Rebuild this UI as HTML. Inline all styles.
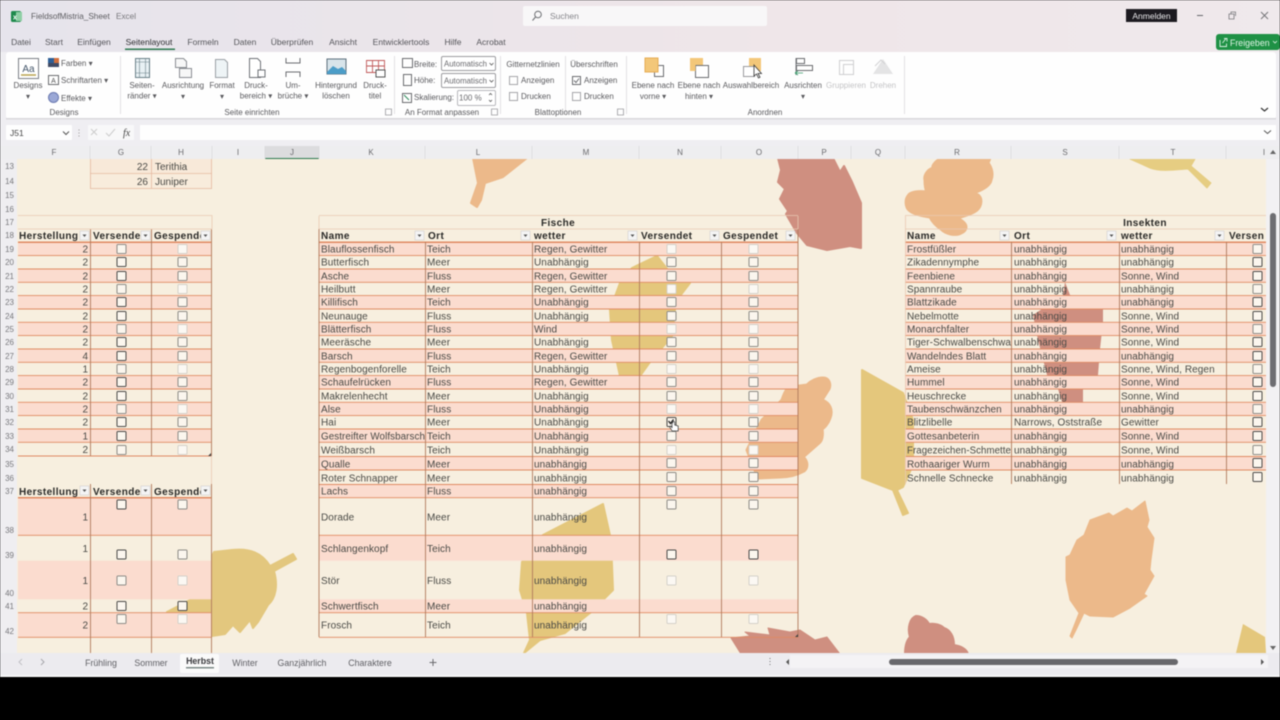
<!DOCTYPE html>
<html lang="de"><head><meta charset="utf-8"><title>FieldsofMistria_Sheet - Excel</title>
<style>
html,body{margin:0;padding:0;background:#000;width:1280px;height:720px;overflow:hidden}
svg{display:block;filter:blur(.45px)}
text{font-family:"Liberation Sans",sans-serif}
.c,.f,.m{width:9px;height:9px;rx:1px}
.c{fill:#fbf6ee;stroke:#4b4a48;stroke-width:1}
.m{fill:#fbf6ee;stroke:#8d8b86;stroke-width:1}
.f{fill:#fbf8f3;stroke:#d4d0c9;stroke-width:1}
.ic{fill:none;stroke:#6a6c70;stroke-width:1}
.lf{stroke-linejoin:round;stroke-width:2}
</style></head><body>
<svg xmlns="http://www.w3.org/2000/svg" width="1280" height="720" viewBox="0 0 1280 720">
<defs>
<linearGradient id="tb" x1="0" x2="1" y1="0" y2="0"><stop offset="0" stop-color="#e6e4ec"/><stop offset=".6" stop-color="#efe6e9"/><stop offset="1" stop-color="#efe9ec"/></linearGradient>
<clipPath id="sh"><rect x="17" y="159" width="1249" height="494"/></clipPath>
</defs>
<rect width="1280" height="720" fill="#000"/>
<rect width="1280" height="677" fill="#efeef2"/>
<rect width="1280" height="52" fill="url(#tb)"/>

<!-- title bar -->
<rect x="11" y="11" width="10" height="11" rx="1.5" fill="#1f8a4d"/><rect x="16" y="12" width="6" height="9" fill="#8fcfa5"/>
<text x="13" y="19.5" font-size="7" font-weight="bold" fill="#fff">x</text>
<text x="31" y="19" font-size="8.2" fill="#5c5c60">FieldsofMistria_Sheet</text><text x="116" y="19" font-size="8.2" fill="#77777b">Excel</text>
<rect x="523" y="6" width="244" height="20" rx="2" fill="#f8f7f8"/>
<circle cx="538" cy="14.5" r="3.3" class="ic"/><path d="M535.5 17 L532.5 20.5" class="ic"/>
<text x="550" y="19" font-size="8.5" fill="#85858a">Suchen</text>
<rect x="1126" y="9" width="51" height="13" fill="#1c1a20"/><text x="1151.5" y="19" font-size="8.5" text-anchor="middle" fill="#e8e8ea">Anmelden</text>
<path d="M1197 15.5h6" stroke="#66666a"/><path d="M1229 14h5v5h-5zM1231 14v-2h4.500v4" fill="none" stroke="#77777b" stroke-width=".8"/><path d="M1261 12l7 7M1268 12l-7 7" stroke="#77777b"/>

<!-- tabs -->
<g font-size="8.500" fill="#55555a" text-anchor="middle">
<text x="21" y="45">Datei</text><text x="54" y="45">Start</text><text x="94" y="45">Einfügen</text><text x="149" y="45" fill="#2d2d30">Seitenlayout</text><text x="203" y="45">Formeln</text><text x="245" y="45">Daten</text><text x="292" y="45">Überprüfen</text><text x="343" y="45">Ansicht</text><text x="401" y="45">Entwicklertools</text><text x="453" y="45">Hilfe</text><text x="491" y="45">Acrobat</text>
</g>
<rect x="125" y="48.500" width="50" height="1.500" fill="#2c7a4f"/>
<rect x="1216" y="34" width="64" height="16" rx="3" fill="#1f9145"/>
<path d="M1220 40v6.500h6.500v-3M1222.500 43l3.500-4.500M1224 38.500h3v3" fill="none" stroke="#d8f0e0" stroke-width=".9"/>
<text x="1230" y="46" font-size="8.800" fill="#dff3e6">Freigeben</text><path d="M1273 41l2 2 2-2" fill="none" stroke="#dff3e6" stroke-width=".8"/>

<!-- ribbon -->
<rect x="6" y="52" width="1270" height="67" rx="3" fill="#fefefe"/><rect x="6" y="118" width="1270" height="1.500" fill="#d9d8dc"/>
<g stroke="#e2e1e4"><path d="M120.500 56v58M394.500 56v58M565.500 56v58M626.500 56v58M904.500 56v58M500.500 56v58"/></g>
<!-- ribbon icons -->
<rect x="18.500" y="58.500" width="20" height="20" fill="#fff" stroke="#7b7f86"/><text x="28.500" y="72" font-size="10" text-anchor="middle" fill="#44566a">Aa</text><path d="M21 75h15" stroke="#b9a24c" stroke-width="1.500"/>
<rect x="48" y="58" width="6" height="5" fill="#2e5f96"/><rect x="54" y="58" width="5" height="5" fill="#d36f3c"/><rect x="48" y="63" width="11" height="4" fill="#404a64"/>
<rect x="48.500" y="75.500" width="10" height="9" class="ic"/><text x="53.500" y="83" font-size="7" text-anchor="middle" fill="#555">A</text>
<circle cx="53.500" cy="97.500" r="5" fill="#9ba8d6" stroke="#6b7ab0"/>
<rect x="135.500" y="58.500" width="14" height="19" fill="#e8f1f4" stroke="#6a8088"/><path d="M139.500 58v20M145.500 58v20M135 62h15M135 73h15" stroke="#6a8088" stroke-width=".6"/>
<path d="M175.500 58.500h8l3 3v6h-11zM179.500 68.500h12v9h-12z" fill="#f7f7f7" stroke="#8a8d92"/>
<path d="M215.500 59.500h9l3 3v15h-12z" fill="#eef4f6" stroke="#9aa0a5"/>
<path d="M249.500 58.500h8l3 3v16h-11z" fill="#fff" stroke="#6e7176"/><rect x="258" y="70" width="7" height="7" fill="#fff" stroke="#6e7176"/>
<path d="M286 58v5h14v-5M286 77v-5h14v5" class="ic"/>
<rect x="327" y="59" width="19" height="15" fill="#d8e4ea" stroke="#5d6f7c"/><path d="M327 72l6-6 5 3 4-2 4 4v3h-19z" fill="#4c9dc8"/>
<path d="M366.500 60.500h18v12h-18zM372.500 60v13M378.500 60v13M366 66h19" fill="none" stroke="#c15a5a" stroke-width=".9"/><rect x="376" y="70" width="9" height="7" fill="#fff" stroke="#555"/>
<rect x="402.500" y="58.500" width="10" height="9" class="ic"/><rect x="403.500" y="74.500" width="8" height="11" class="ic"/><rect x="402.500" y="93.500" width="9" height="9" class="ic"/><path d="M404 95l5 5" stroke="#2d8a5a"/>
<rect x="441.500" y="56.500" width="54" height="14" rx="1.500" fill="#fff" stroke="#9c9ca0"/><rect x="441.500" y="73.500" width="54" height="14" rx="1.500" fill="#fff" stroke="#9c9ca0"/><rect x="457.500" y="90.500" width="38" height="15" rx="1.500" fill="#fff" stroke="#b8b8bc"/>
<path d="M489.500 63l2 2 2-2M489.500 80l2 2 2-2" fill="none" stroke="#555" stroke-width=".8"/><path d="M489 95l1.500-1.500 1.500 1.500M489 100l1.500 1.500 1.500-1.500" fill="none" stroke="#555" stroke-width=".8"/>
<rect x="509.500" y="76.500" width="8" height="8" fill="none" stroke="#a6a6aa"/><rect x="509.500" y="92.500" width="8" height="8" fill="none" stroke="#a6a6aa"/><rect x="572.500" y="76.500" width="8" height="8" class="ic"/><path d="M574 80.500l2 2 3-4" class="ic"/><rect x="572.500" y="92.500" width="8" height="8" fill="none" stroke="#a6a6aa"/>
<rect x="645" y="58" width="13" height="14" fill="#f3c779" stroke="#e6ad55"/><path d="M658.500 65.500h5v11h-9v-4" class="ic"/>
<rect x="690" y="58" width="13" height="10" fill="#f3c779"/><rect x="695.500" y="65.500" width="13" height="12" fill="#fff" stroke="#6a6c70"/><rect x="690" y="58" width="5.500" height="13" fill="#f3c779"/>
<rect x="749" y="58" width="12" height="13" fill="#f3c779"/><rect x="743.500" y="66.500" width="11" height="10" fill="#fff" stroke="#9a9a9e"/>
<path d="M754 65v11l2.500-2 2 4 1.500-.8-2-3.700h3.500z" fill="#fff" stroke="#333" stroke-width=".8"/>
<path d="M796 58v17" stroke="#7a7d82"/><rect x="796.500" y="58.500" width="8" height="5" class="ic"/><rect x="796.500" y="65.500" width="16" height="5" class="ic"/><path d="M795 73h8M795 73l3-2M795 73l3 2" stroke="#3a9a6a" fill="none" stroke-width=".8"/>
<path d="M839.500 60.500h14v14h-14zM843.500 64.500h10v10h-10z" fill="none" stroke="#cfcfd1"/>
<path d="M873 74l10-15 10 15z" fill="#e4e4e5"/><path d="M875 66l6-6 4 4" fill="none" stroke="#d2d2d4"/>
<path d="M385.500 109h6v6h-6z" fill="none" stroke="#9a9a9e" stroke-width=".8"/><path d="M491.500 109h6v6h-6zM617.500 109h6v6h-6z" fill="none" stroke="#9a9a9e" stroke-width=".8"/>
<path d="M1261 108l3.500 3 3.500-3" fill="none" stroke="#333" stroke-width="1.200"/>
<g font-size="8" fill="#5a5a5e" text-anchor="middle">
<text x="28" y="88">Designs</text><text x="28" y="99">▾</text><text x="142" y="88">Seiten-</text><text x="142" y="98.500">ränder ▾</text>
<text x="183" y="88">Ausrichtung</text><text x="183" y="99">▾</text><text x="222" y="88">Format</text><text x="222" y="99">▾</text><text x="256" y="88">Druck-</text><text x="256" y="98.500">bereich ▾</text>
<text x="293" y="88">Um-</text><text x="293" y="98.500">brüche ▾</text><text x="336" y="88">Hintergrund</text><text x="336" y="98.500">löschen</text><text x="375" y="88">Druck-</text><text x="375" y="98.500">titel</text>
<text x="653" y="88">Ebene nach</text><text x="653" y="99">vorne ▾</text><text x="699" y="88">Ebene nach</text><text x="699" y="99">hinten ▾</text><text x="751" y="88">Auswahlbereich</text><text x="803" y="88">Ausrichten</text><text x="803" y="99">▾</text>
<text x="846" y="88" fill="#c4c4c6">Gruppieren</text><text x="883" y="88" fill="#c4c4c6">Drehen</text>
<text x="64" y="115">Designs</text><text x="252" y="115">Seite einrichten</text><text x="442" y="115">An Format anpassen</text><text x="558" y="115">Blattoptionen</text><text x="765" y="115">Anordnen</text>
<text x="533" y="67">Gitternetzlinien</text><text x="594" y="67">Überschriften</text>
</g>
<g font-size="8" fill="#5a5a5e">
<text x="61" y="66">Farben ▾</text><text x="61" y="83">Schriftarten ▾</text><text x="61" y="101">Effekte ▾</text>
<text x="414" y="67">Breite:</text><text x="414" y="83">Höhe:</text><text x="414" y="100">Skalierung:</text>
<text x="444" y="66.500" fill="#6a6a6e" textLength="43" lengthAdjust="spacingAndGlyphs">Automatisch</text><text x="444" y="83.500" fill="#6a6a6e" textLength="43" lengthAdjust="spacingAndGlyphs">Automatisch</text><text x="459" y="100.500" fill="#6a6a6e">100 %</text>
<text x="521" y="83">Anzeigen</text><text x="521" y="99">Drucken</text><text x="584" y="83">Anzeigen</text><text x="584" y="99">Drucken</text>
</g>

<!-- formula bar -->
<rect x="6" y="125" width="66" height="15" rx="1" fill="#fefefe"/><text x="10" y="136" font-size="8.500" fill="#444">J51</text><path d="M63 131.500l3 3 3-3" fill="none" stroke="#555"/>
<path d="M79 129.500v1M79 132.500v1M79 135.500v1" stroke="#999"/>
<rect x="88" y="125" width="46" height="15" fill="#f8f8f9"/><path d="M91 129l6 6M97 129l-6 6" stroke="#ccc"/><path d="M106 133l3 3 6-7" fill="none" stroke="#ccc"/>
<text x="123" y="136" font-size="10" font-style="italic" fill="#444" style="font-family:'Liberation Serif',serif">fx</text>
<rect x="140" y="125" width="1136" height="15" fill="#fefefe"/><path d="M1264 130.500l3.500 3 3.500-3" fill="none" stroke="#555"/>

<!-- col headers -->
<rect x="0" y="146" width="1280" height="13" fill="#eeeef0"/>
<rect x="265" y="146" width="54" height="13" fill="#dcdcde"/><rect x="265" y="158" width="54" height="1" fill="#2c7a4f"/>
<path d="M90 146v13M151 146v13M212 146v13M265 146v13M319 146v13M425 146v13M532 146v13M639 146v13M721 146v13M798 146v13M851 146v13M905 146v13M1011 146v13M1119 146v13M1226 146v13" stroke="#d8d8da" stroke-width=".7"/>
<g font-size="8" fill="#6a6a6e" text-anchor="middle"><text x="54" y="155">F</text><text x="121" y="155">G</text><text x="181" y="155">H</text><text x="238" y="155">I</text><text x="292" y="155">J</text><text x="371" y="155">K</text><text x="478" y="155">L</text><text x="586" y="155">M</text><text x="680" y="155">N</text><text x="759" y="155">O</text><text x="824" y="155">P</text><text x="878" y="155">Q</text><text x="957" y="155">R</text><text x="1065" y="155">S</text><text x="1173" y="155">T</text><text x="1264" y="155">I</text></g>

<!-- sheet -->
<rect x="17" y="159" width="1249" height="494" fill="#f7efdf"/>
<g clip-path="url(#sh)">
<path fill="#ecb98a" stroke="#ecb98a" class="lf" d="M473 158H527L503 177 485 183 481 200 477 207 471 203 478 183Z"/>
<path fill="#cf8f80" stroke="#cf8f80" class="lf" d="M778 158L781 170 778 182 785 189 780 199 788 211 786 214 797 233 807 245 827 250 850 246 861 248 861 203 852 182 844 166 840 172 833 158Z"/>
<path fill="#ecb98a" stroke="#ecb98a" stroke-width="3" stroke-linejoin="round" d="M943 158C936 160 932 166 933 168 927 170 924 176 925 180 925 186 926 190 927 192 918 191 910 192 908 196 905 200 906 206 908 209 912 214 922 216 930 217 933 223 938 227 941 229 946 234 955 236 961 233 966 231 967 227 965 224 962 220 958 219 957 218 964 216 972 214 977 210 982 205 982 198 978 195L973 193C982 190 990 186 991 180 993 175 992 168 988 163L990 158Z"/>
<path fill="#e6cd82" stroke="#e6cd82" stroke-linejoin="round" d="M1130 159H1195L1191 166 1211 183 1207 188 1188 169C1175 170 1160 172 1150 168Z"/>
<path fill="#e4c77c" stroke="#e4c77c" class="lf" d="M657 256L668 270 690 283 680 296 675 309 672 336 650 362 640 376 620 376 612 340 610 310 620 283 632 268Z"/>
<path fill="#e4c77c" stroke="#e4c77c" class="lf" d="M603 504L611 540 613 590 590 613 565 633 540 640 524 653 530 640 527 613 520 590 522 562 543 535Z"/>
<path fill="#ecb98a" stroke="#ecb98a" stroke-width="3" stroke-linejoin="round" d="M823 378C829 378 831 384 829 389L822 400C830 403 833 410 830 418 828 424 824 428 822 429 823 435 822 441 819 443L803 457C808 461 808 468 804 471 795 476 785 477 780 477L758 478 747 450 762 420 782 400C784 394 786 390 788 388 795 386 802 386 807 385 811 381 817 378 823 378Z"/>
<path fill="#e4c77c" stroke="#e4c77c" class="lf" d="M862 370L903 393 913 420 913 465 903 487 897 490 908 513 903 515 893 490 862 478Z"/>
<path fill="#cf8f80" d="M1065 282L1070 295 1103 309 1103 322 1100 349 1098 375 1083 389 1083 405 1063 405 1058 389 1047 375 1038 340 1033 315 1063 295Z"/>
<path fill="#e3c77e" stroke="#e3c77e" class="lf" d="M167 612L190 600 212 585 212 556 214 552 232 550C250 548 262 553 270 566L293 554 296 559 274 571C278 585 276 598 268 605L258 622 253 628 250 620 240 632 233 625 225 634 212 636 180 625Z"/>
<path fill="#ecb98a" stroke="#ecb98a" stroke-linejoin="round" d="M1145 501L1149 520 1147 527 1154 538 1151 560 1150 570 1154 576 1144 594 1147 596 1130 608 1113 617 1090 616 1084 613 1076 630 1072 638 1070 636 1079 613 1070 600 1066 580 1066 557 1070 555 1077 540 1084 535 1090 520 1109 513 1113 516 1127 508 1132 511Z"/>
<path fill="#cf8f80" stroke="#cf8f80" stroke-linejoin="round" d="M731 638L750 636 745 632 770 635 768 628 790 632 800 630 815 640 827 637 840 654H741Z"/>
<path fill="#cf8f80" stroke="#cf8f80" stroke-width="2" stroke-linejoin="round" d="M916 616C922 616 927 620 929 624 935 623 941 625 944 628 950 630 954 636 954 645 960 646 966 648 968 654H905C905 645 907 640 910 637 907 628 910 618 916 616Z"/>
<path fill="#e4c77c" d="M1243 624L1265 637 1266 653H1236Z"/>

<!-- left top small -->
<rect x="90" y="159" width="122" height="14" fill="#f8e9d9"/><rect x="90" y="173.500" width="122" height="15" fill="#f8ecdc"/>
<path d="M90.500 159v29.500M151.500 159v29.500M211.500 159v29.500M90 173.500h122M90 188.500h122" stroke="#e5b9a0" stroke-width=".8" fill="none"/>
<text x="148" y="170" font-size="10" text-anchor="end" fill="#4a4a46">22</text><text x="155" y="170" font-size="10" fill="#4a4a46">Terithia</text>
<text x="148" y="185" font-size="10" text-anchor="end" fill="#4a4a46">26</text><text x="155" y="185" font-size="10" fill="#4a4a46">Juniper</text>

<!-- pink rows: left top -->
<g fill="#fbdccf">
<rect x="18" y="242.300" width="193" height="13.300"/><rect x="18" y="269" width="193" height="13.300"/><rect x="18" y="295.600" width="193" height="13.400"/><rect x="18" y="322.300" width="193" height="13.300"/><rect x="18" y="349" width="193" height="13.300"/><rect x="18" y="375.600" width="193" height="13.400"/><rect x="18" y="402.300" width="193" height="13.300"/><rect x="18" y="429" width="193" height="13.300"/>
<rect x="18" y="497.700" width="193" height="37.600"/><rect x="18" y="560.700" width="193" height="38.600"/><rect x="18" y="612.700" width="193" height="24.600"/>
<!-- fish -->
<rect x="319" y="242.300" width="479" height="13.300"/><rect x="319" y="269" width="479" height="13.300"/><rect x="319" y="295.600" width="479" height="13.400"/><rect x="319" y="322.300" width="479" height="13.300"/><rect x="319" y="349" width="479" height="13.300"/><rect x="319" y="375.600" width="479" height="13.400"/><rect x="319" y="402.300" width="479" height="13.300"/><rect x="319" y="429" width="479" height="13.300"/><rect x="319" y="456.500" width="479" height="13.500"/><rect x="319" y="484.500" width="479" height="13.200"/><rect x="319" y="535.300" width="479" height="25.400"/><rect x="319" y="599.300" width="479" height="13.400"/>
<!-- insects -->
<rect x="905" y="242.300" width="361" height="13.300"/><rect x="905" y="269" width="361" height="13.300"/><rect x="905" y="295.600" width="361" height="13.400"/><rect x="905" y="322.300" width="361" height="13.300"/><rect x="905" y="349" width="361" height="13.300"/><rect x="905" y="375.600" width="361" height="13.400"/><rect x="905" y="402.300" width="361" height="13.300"/><rect x="905" y="429" width="361" height="13.300"/><rect x="905" y="456.500" width="361" height="13.500"/>
</g>
<!-- table lines -->
<g stroke="#e08a62" stroke-width=".9" fill="none">
<path d="M18 255.600H211M18 269H211M18 282.300H211M18 295.600H211M18 309H211M18 322.300H211M18 335.600H211M18 349H211M18 362.300H211M18 375.600H211M18 389H211M18 402.300H211M18 415.600H211M18 429H211M18 442.300H211M18 456H211"/>
<path d="M319 255.600H798M319 269H798M319 282.300H798M319 295.600H798M319 309H798M319 322.300H798M319 335.600H798M319 349H798M319 362.300H798M319 375.600H798M319 389H798M319 402.300H798M319 415.600H798M319 429H798M319 442.300H798M319 456.500H798M319 470H798M319 484.500H798M319 497.700H798M319 535.300H798M319 612.700H798M319 637.300H798"/>
<path d="M905 255.600H1266M905 269H1266M905 282.300H1266M905 295.600H1266M905 309H1266M905 322.300H1266M905 335.600H1266M905 349H1266M905 362.300H1266M905 375.600H1266M905 389H1266M905 402.300H1266M905 415.600H1266M905 429H1266M905 442.300H1266M905 456.500H1266M905 470H1266"/>
<path d="M18 535.300H211M18 612.700H211M18 637.300H211"/>
</g>
<g stroke="#e08a62" stroke-width="1.500"><path d="M18 242.300H211M319 242.300H798M905 242.300H1266M18 497.700H211"/></g>
<g stroke="#b07a5c" stroke-width=".9" fill="none">
<path d="M90.500 229V456M151.500 229V456M211.500 229V456M90.500 484V653M151.500 484V653M211.500 484V653"/>
<path d="M425.500 242V637M532.500 242V637M639.500 242V637M721.500 242V637M798 229V637M319 229V637"/>
<path d="M1011.500 242V484M1119.500 242V484M1226.500 242V484"/>
</g>
<g stroke="#e9c9b2" stroke-width=".8" fill="none"><path d="M18 215.500H212V229M319 215.500H798M905 215.500H1266M319 229H798M905 229H1266M18 229H212M905.500 216V484M211.500 456V484M319 216V229M798 216V229"/></g>
<path d="M208 456l3-3v3zM795 637l3-3v3z" fill="#444"/>

<!-- headers -->
<g font-size="10" font-weight="bold" fill="#2a2a28" letter-spacing=".4">
<text x="19" y="239">Herstellung</text><text x="93" y="239">Versende</text><text x="154" y="239">Gespende</text>
<text x="19" y="495">Herstellung</text><text x="93" y="495">Versende</text><text x="154" y="495">Gespende</text>
<text x="321" y="239">Name</text><text x="428" y="239">Ort</text><text x="534" y="239">wetter</text><text x="641" y="239">Versendet</text><text x="723" y="239">Gespendet</text>
<text x="907" y="239">Name</text><text x="1014" y="239">Ort</text><text x="1121" y="239">wetter</text><text x="1229" y="239">Versen</text>
<text x="558" y="226" text-anchor="middle">Fische</text><text x="1145" y="226" text-anchor="middle">Insekten</text>
</g>
<g fill="#f4f4f4" stroke="#c8c8c8" stroke-width=".5">
<rect x="80" y="231" width="9" height="9"/><rect x="141" y="231" width="9" height="9"/><rect x="201" y="231" width="9" height="9"/><rect x="80" y="486" width="9" height="9"/><rect x="141" y="486" width="9" height="9"/><rect x="201" y="486" width="9" height="9"/>
<rect x="415" y="231" width="9" height="9"/><rect x="521" y="231" width="9" height="9"/><rect x="628" y="231" width="9" height="9"/><rect x="710" y="231" width="9" height="9"/><rect x="786" y="231" width="9" height="9"/>
<rect x="1000" y="231" width="9" height="9"/><rect x="1107" y="231" width="9" height="9"/><rect x="1215" y="231" width="9" height="9"/>
</g>
<g fill="#555"><path d="M82.500 234.500h4l-2 2.500zM143.500 234.500h4l-2 2.500zM203.500 234.500h4l-2 2.500zM82.500 489.500h4l-2 2.500zM143.500 489.500h4l-2 2.500zM203.500 489.500h4l-2 2.500zM417.500 234.500h4l-2 2.500zM523.500 234.500h4l-2 2.500zM630.500 234.500h4l-2 2.500zM712.500 234.500h4l-2 2.500zM788.500 234.500h4l-2 2.500zM1002.500 234.500h4l-2 2.500zM1109.500 234.500h4l-2 2.500zM1217.500 234.500h4l-2 2.500z"/></g>

<!-- left values -->
<g font-size="10" fill="#4a4a46" text-anchor="end">
<text x="88" y="252.500">2</text><text x="88" y="265.500">2</text><text x="88" y="279.500">2</text><text x="88" y="292.500">2</text><text x="88" y="305.500">2</text><text x="88" y="319.500">2</text><text x="88" y="332.500">2</text><text x="88" y="345.500">2</text><text x="88" y="359.500">4</text><text x="88" y="372.500">1</text><text x="88" y="385.500">2</text><text x="88" y="399.500">2</text><text x="88" y="412.500">2</text><text x="88" y="425.500">2</text><text x="88" y="439.500">1</text><text x="88" y="453">2</text>
<text x="88" y="520.500">1</text><text x="88" y="552">1</text><text x="88" y="584">1</text><text x="88" y="609.500">2</text><text x="88" y="628.500">2</text>
</g>

<!-- fish text -->
<g font-size="10" fill="#4a4a46" letter-spacing=".08">
<text x="321" y="252.500">Blauflossenfisch</text><text x="427" y="252.500">Teich</text><text x="534" y="252.500">Regen, Gewitter</text>
<text x="321" y="265.500">Butterfisch</text><text x="427" y="265.500">Meer</text><text x="534" y="265.500">Unabhängig</text>
<text x="321" y="279.500">Asche</text><text x="427" y="279.500">Fluss</text><text x="534" y="279.500">Regen, Gewitter</text>
<text x="321" y="292.500">Heilbutt</text><text x="427" y="292.500">Meer</text><text x="534" y="292.500">Regen, Gewitter</text>
<text x="321" y="305.500">Killifisch</text><text x="427" y="305.500">Teich</text><text x="534" y="305.500">Unabhängig</text>
<text x="321" y="319.500">Neunauge</text><text x="427" y="319.500">Fluss</text><text x="534" y="319.500">Unabhängig</text>
<text x="321" y="332.500">Blätterfisch</text><text x="427" y="332.500">Fluss</text><text x="534" y="332.500">Wind</text>
<text x="321" y="345.500">Meeräsche</text><text x="427" y="345.500">Meer</text><text x="534" y="345.500">Unabhängig</text>
<text x="321" y="359.500">Barsch</text><text x="427" y="359.500">Fluss</text><text x="534" y="359.500">Regen, Gewitter</text>
<text x="321" y="372.500">Regenbogenforelle</text><text x="427" y="372.500">Teich</text><text x="534" y="372.500">Unabhängig</text>
<text x="321" y="385.500">Schaufelrücken</text><text x="427" y="385.500">Fluss</text><text x="534" y="385.500">Regen, Gewitter</text>
<text x="321" y="399.500">Makrelenhecht</text><text x="427" y="399.500">Meer</text><text x="534" y="399.500">Unabhängig</text>
<text x="321" y="412.500">Alse</text><text x="427" y="412.500">Fluss</text><text x="534" y="412.500">Unabhängig</text>
<text x="321" y="425.500">Hai</text><text x="427" y="425.500">Meer</text><text x="534" y="425.500">Unabhängig</text>
<text x="321" y="439.500" textLength="104" lengthAdjust="spacingAndGlyphs">Gestreifter Wolfsbarsch</text><text x="427" y="439.500">Teich</text><text x="534" y="439.500">Unabhängig</text>
<text x="321" y="453.500">Weißbarsch</text><text x="427" y="453.500">Teich</text><text x="534" y="453.500">Unabhängig</text>
<text x="321" y="467.500">Qualle</text><text x="427" y="467.500">Meer</text><text x="534" y="467.500">unabhängig</text>
<text x="321" y="481.500">Roter Schnapper</text><text x="427" y="481.500">Meer</text><text x="534" y="481.500">unabhängig</text>
<text x="321" y="494.500">Lachs</text><text x="427" y="494.500">Fluss</text><text x="534" y="494.500">unabhängig</text>
<text x="321" y="520.500">Dorade</text><text x="427" y="520.500">Meer</text><text x="534" y="520.500">unabhängig</text>
<text x="321" y="552">Schlangenkopf</text><text x="427" y="552">Teich</text><text x="534" y="552">unabhängig</text>
<text x="321" y="584">Stör</text><text x="427" y="584">Fluss</text><text x="534" y="584">unabhängig</text>
<text x="321" y="609.500">Schwertfisch</text><text x="427" y="609.500">Meer</text><text x="534" y="609.500">unabhängig</text>
<text x="321" y="628.500">Frosch</text><text x="427" y="628.500">Teich</text><text x="534" y="628.500">unabhängig</text>
</g>

<!-- insect text -->
<g font-size="10" fill="#4a4a46" letter-spacing=".08">
<text x="907" y="252.500">Frostfüßler</text><text x="1014" y="252.500">unabhängig</text><text x="1121" y="252.500">unabhängig</text>
<text x="907" y="265.500">Zikadennymphe</text><text x="1014" y="265.500">unabhängig</text><text x="1121" y="265.500">unabhängig</text>
<text x="907" y="279.500">Feenbiene</text><text x="1014" y="279.500">unabhängig</text><text x="1121" y="279.500">Sonne, Wind</text>
<text x="907" y="292.500">Spannraube</text><text x="1014" y="292.500">unabhängig</text><text x="1121" y="292.500">unabhängig</text>
<text x="907" y="305.500">Blattzikade</text><text x="1014" y="305.500">unabhängig</text><text x="1121" y="305.500">unabhängig</text>
<text x="907" y="319.500">Nebelmotte</text><text x="1014" y="319.500">unabhängig</text><text x="1121" y="319.500">Sonne, Wind</text>
<text x="907" y="332.500">Monarchfalter</text><text x="1014" y="332.500">unabhängig</text><text x="1121" y="332.500">Sonne, Wind</text>
<text x="907" y="345.500" textLength="104" lengthAdjust="spacingAndGlyphs">Tiger-Schwalbenschwa</text><text x="1014" y="345.500">unabhängig</text><text x="1121" y="345.500">Sonne, Wind</text>
<text x="907" y="359.500">Wandelndes Blatt</text><text x="1014" y="359.500">unabhängig</text><text x="1121" y="359.500">unabhängig</text>
<text x="907" y="372.500">Ameise</text><text x="1014" y="372.500">unabhängig</text><text x="1121" y="372.500">Sonne, Wind, Regen</text>
<text x="907" y="385.500">Hummel</text><text x="1014" y="385.500">unabhängig</text><text x="1121" y="385.500">Sonne, Wind</text>
<text x="907" y="399.500">Heuschrecke</text><text x="1014" y="399.500">unabhängig</text><text x="1121" y="399.500">Sonne, Wind</text>
<text x="907" y="412.500">Taubenschwänzchen</text><text x="1014" y="412.500">unabhängig</text><text x="1121" y="412.500">unabhängig</text>
<text x="907" y="425.500">Blitzlibelle</text><text x="1014" y="425.500">Narrows, Oststraße</text><text x="1121" y="425.500">Gewitter</text>
<text x="907" y="439.500">Gottesanbeterin</text><text x="1014" y="439.500">unabhängig</text><text x="1121" y="439.500">Sonne, Wind</text>
<text x="907" y="453.500" textLength="104" lengthAdjust="spacingAndGlyphs">Fragezeichen-Schmette</text><text x="1014" y="453.500">unabhängig</text><text x="1121" y="453.500">Sonne, Wind</text>
<text x="907" y="467.500">Rothaariger Wurm</text><text x="1014" y="467.500">unabhängig</text><text x="1121" y="467.500">unabhängig</text>
<text x="907" y="481.500">Schnelle Schnecke</text><text x="1014" y="481.500">unabhängig</text><text x="1121" y="481.500">unabhängig</text>
</g>

<!-- checkboxes G -->
<g>
<rect class="m" x="117" y="244.500"/><rect class="c" x="117" y="257.500"/><rect class="c" x="117" y="271.500"/><rect class="m" x="117" y="284.500"/><rect class="c" x="117" y="297.500"/><rect class="c" x="117" y="311.500"/><rect class="m" x="117" y="324.500"/><rect class="c" x="117" y="337.500"/><rect class="c" x="117" y="351.500"/><rect class="m" x="117" y="364.500"/><rect class="c" x="117" y="377.500"/><rect class="c" x="117" y="391.500"/><rect class="m" x="117" y="404.500"/><rect class="c" x="117" y="417.500"/><rect class="c" x="117" y="431.500"/><rect class="m" x="117" y="445.500"/>
<rect class="c" x="117" y="500"/><rect class="c" x="117" y="550"/><rect class="m" x="117" y="576"/><rect class="c" x="117" y="601.500"/><rect class="m" x="117" y="614.500"/>
<!-- H -->
<rect class="f" x="178" y="244.500"/><rect class="m" x="178" y="257.500"/><rect class="m" x="178" y="271.500"/><rect class="f" x="178" y="284.500"/><rect class="m" x="178" y="297.500"/><rect class="m" x="178" y="311.500"/><rect class="f" x="178" y="324.500"/><rect class="m" x="178" y="337.500"/><rect class="m" x="178" y="351.500"/><rect class="f" x="178" y="364.500"/><rect class="m" x="178" y="377.500"/><rect class="m" x="178" y="391.500"/><rect class="f" x="178" y="404.500"/><rect class="m" x="178" y="417.500"/><rect class="m" x="178" y="431.500"/><rect class="f" x="178" y="445.500"/>
<rect class="m" x="178" y="500"/><rect class="m" x="178" y="550"/><rect class="f" x="178" y="576"/><rect class="c" x="178" y="601.500"/><rect class="f" x="178" y="614.500"/>
<!-- N -->
<rect class="f" x="667" y="244.500"/><rect class="m" x="667" y="257.500"/><rect class="m" x="667" y="271.500"/><rect class="f" x="667" y="284.500"/><rect class="m" x="667" y="297.500"/><rect class="m" x="667" y="311.500"/><rect class="f" x="667" y="324.500"/><rect class="m" x="667" y="337.500"/><rect class="m" x="667" y="351.500"/><rect class="f" x="667" y="364.500"/><rect class="m" x="667" y="377.500"/><rect class="m" x="667" y="391.500"/><rect class="f" x="667" y="404.500"/><rect class="c" x="667" y="417.500"/><rect class="m" x="667" y="431.500"/><rect class="f" x="667" y="445.500"/><rect class="m" x="667" y="458.500"/><rect class="m" x="667" y="472.500"/><rect class="m" x="667" y="486.500"/><rect class="m" x="667" y="500"/><rect class="c" x="667" y="550"/><rect class="f" x="667" y="576"/><rect class="f" x="667" y="614.500"/>
<!-- O -->
<rect class="f" x="749" y="244.500"/><rect class="m" x="749" y="257.500"/><rect class="m" x="749" y="271.500"/><rect class="f" x="749" y="284.500"/><rect class="m" x="749" y="297.500"/><rect class="m" x="749" y="311.500"/><rect class="f" x="749" y="324.500"/><rect class="m" x="749" y="337.500"/><rect class="m" x="749" y="351.500"/><rect class="f" x="749" y="364.500"/><rect class="m" x="749" y="377.500"/><rect class="m" x="749" y="391.500"/><rect class="f" x="749" y="404.500"/><rect class="m" x="749" y="417.500"/><rect class="m" x="749" y="431.500"/><rect class="f" x="749" y="445.500"/><rect class="m" x="749" y="458.500"/><rect class="m" x="749" y="472.500"/><rect class="m" x="749" y="486.500"/><rect class="m" x="749" y="500"/><rect class="c" x="749" y="550"/><rect class="f" x="749" y="576"/><rect class="f" x="749" y="614.500"/>
<!-- T/U -->
<rect class="m" x="1253" y="244.500"/><rect class="c" x="1253" y="257.500"/><rect class="c" x="1253" y="271.500"/><rect class="m" x="1253" y="284.500"/><rect class="c" x="1253" y="297.500"/><rect class="c" x="1253" y="311.500"/><rect class="m" x="1253" y="324.500"/><rect class="c" x="1253" y="337.500"/><rect class="c" x="1253" y="351.500"/><rect class="m" x="1253" y="364.500"/><rect class="c" x="1253" y="377.500"/><rect class="c" x="1253" y="391.500"/><rect class="m" x="1253" y="404.500"/><rect class="c" x="1253" y="417.500"/><rect class="c" x="1253" y="431.500"/><rect class="m" x="1253" y="445.500"/><rect class="c" x="1253" y="458.500"/><rect class="c" x="1253" y="472.500"/>
</g>
<path d="M668.500 421l2 2.500 3-4" fill="none" stroke="#222" stroke-width="1.400"/>
<path d="M671 421.500v6l-1.500-1.500-.8 1 2.500 4h6v-5l-3.500-1v-2.500a1 1 0 0 0-2 0z" fill="#fff" stroke="#333" stroke-width=".7" transform="translate(1 0)"/>
</g>

<!-- row gutter -->
<rect x="0" y="159" width="17" height="494" fill="#efeef1"/>
<g font-size="8" fill="#77777b" text-anchor="end">
<text x="14" y="169">13</text><text x="14" y="184">14</text><text x="14" y="198">15</text><text x="14" y="212">16</text><text x="14" y="225">17</text><text x="14" y="238">18</text><text x="14" y="252">19</text><text x="14" y="265">20</text><text x="14" y="279">21</text><text x="14" y="292">22</text><text x="14" y="305">23</text><text x="14" y="319">24</text><text x="14" y="332">25</text><text x="14" y="345">26</text><text x="14" y="359">27</text><text x="14" y="372">28</text><text x="14" y="385">29</text><text x="14" y="399">30</text><text x="14" y="412">31</text><text x="14" y="425">32</text><text x="14" y="439">33</text><text x="14" y="452">34</text><text x="14" y="467">35</text><text x="14" y="481">36</text><text x="14" y="494">37</text><text x="14" y="533">38</text><text x="14" y="558">39</text><text x="14" y="596">40</text><text x="14" y="609">41</text><text x="14" y="634">42</text>
</g>

<!-- vertical scrollbar -->
<rect x="1266" y="159" width="14" height="494" fill="#f2f1f3"/>
<rect x="1270" y="213" width="6" height="174" rx="3" fill="#6e6e72"/>
<path d="M1270 154l3-4 3 4z" fill="#666"/><path d="M1270 646l3 4 3-4z" fill="#666"/>

<!-- tab bar -->
<rect x="0" y="653" width="1280" height="24" fill="#ecebef"/>
<path d="M22 659l-3 3 3 3" fill="none" stroke="#c2c2c6"/><path d="M41 659l3 3-3 3" fill="none" stroke="#a8a8ac"/>
<rect x="180" y="654" width="39" height="19" rx="2" fill="#fafafa"/>
<g font-size="8.800" fill="#5f5f64" text-anchor="middle"><text x="101" y="666">Frühling</text><text x="151" y="666">Sommer</text><text x="200" y="664" font-weight="bold" fill="#38383c">Herbst</text><text x="245" y="666">Winter</text><text x="302" y="666">Ganzjährlich</text><text x="370" y="666">Charaktere</text></g>
<rect x="186" y="667" width="28" height="1.500" fill="#7d8a88"/>
<path d="M433 659v7M429.500 662.500h7" stroke="#6a6a6e"/>
<path d="M770 658v1M770 661v1M770 664v1" stroke="#777"/>
<path d="M789 659v6l-3-3z" fill="#555"/><rect x="790" y="655" width="478" height="13" fill="#f4f3f5"/>
<rect x="889" y="659" width="289" height="6" rx="3" fill="#68686c"/>
<path d="M1261 659v6l3-3z" fill="#555"/>
<rect x="0" y="675" width="1280" height="2" fill="#f7f7f8"/>
<rect x="0" y="677" width="1280" height="43" fill="#000"/>
</svg>
</body></html>
